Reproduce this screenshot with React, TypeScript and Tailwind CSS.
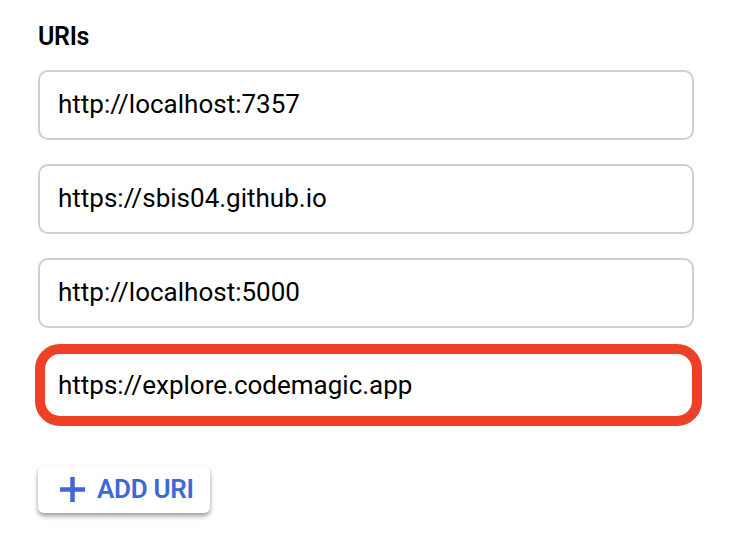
const uris = ['http://localhost:7357', 'https://sbis04.github.io', 'http://localhost:5000'];

export default function App() {
  return (
    <div className="w-[734px] h-[540px] bg-white overflow-hidden pl-[38px] pr-[40px] pt-[22px] font-['Roboto',sans-serif]">
      <h2 className="text-[25px] leading-[30px] font-semibold tracking-[-0.3px] text-black">URIs</h2>
      <div className="mt-[18px] flex flex-col gap-[24px]">
        {uris.map((uri) => (
          <div
            key={uri}
            className="h-[70px] flex items-center pl-[18px] pb-[2px] border-2 border-[#cfcfcf] rounded-[10px] text-[26px] text-black"
          >
            {uri}
          </div>
        ))}
        <div className="relative h-[70px] flex items-center pl-[20px] pb-[4px] text-[26px] text-black">
          <div className="absolute -top-[8px] -bottom-[4px] -left-[3px] -right-[8px] border-[10px] border-[#ee4026] rounded-[25px]" />
          https://explore.codemagic.app
        </div>
      </div>
      <button className="mt-[44px] h-[47px] w-[172px] flex items-center pl-[22px] gap-[12px] rounded-[6px] bg-white shadow-[0_3px_5px_rgba(0,0,0,0.4)] text-[#3f68d4] text-[26px] font-semibold tracking-[-0.3px]">
        <svg width="25" height="25" viewBox="0 0 25 25" fill="none" stroke="currentColor" strokeWidth="4.5">
          <path d="M12.5 0v25M0 12.5h25" />
        </svg>
        ADD URI
      </button>
    </div>
  );
}
